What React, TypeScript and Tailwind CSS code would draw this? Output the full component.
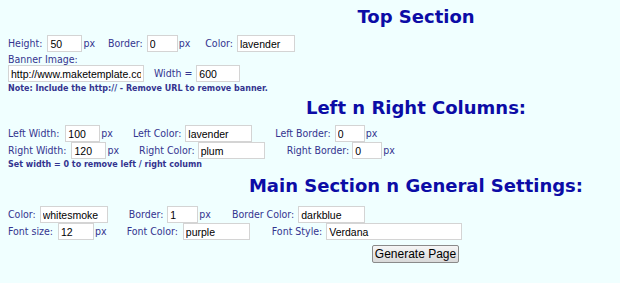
import React from "react";

function Field({ value, w, className = "" }: { value: string; w: string; className?: string }) {
  return (
    <input
      readOnly
      value={value}
      className={`${w} h-[17px] border border-[#d4d4d4] bg-white px-[2px] text-[10.5px] text-black font-['Liberation_Sans',Arial,sans-serif] outline-none ${className}`}
    />
  );
}

function Heading({ children }: { children: React.ReactNode }) {
  return (
    <div className="flex justify-center pl-[212px]">
      <h2 className="text-[18px] font-bold leading-[22px] text-[#0c0ca6] whitespace-nowrap font-['DejaVu_Sans',Verdana,sans-serif]">
        {children}
      </h2>
    </div>
  );
}

export default function App() {
  return (
    <div className="w-[620px] h-[283px] overflow-hidden bg-[#f0ffff] font-['DejaVu_Sans_Condensed','DejaVu_Sans',Tahoma,sans-serif] text-[10.5px] text-[#34348f]">
      <div className="pt-[6px] px-[8px]">
        <Heading>Top Section</Heading>

        <div className="mt-[7px] flex items-center h-[17px]">
          <span>Height:</span>
          <Field value="50" w="w-[35px]" className="ml-[5px]" />
          <span className="ml-[1px]">px</span>
          <span className="ml-[13px]">Border:</span>
          <Field value="0" w="w-[31px]" className="ml-[4px]" />
          <span className="ml-[1px]">px</span>
          <span className="ml-[15px]">Color:</span>
          <Field value="lavender" w="w-[58px]" className="ml-[4px]" />
        </div>
        <div className="leading-[12px] mt-[1px]">Banner Image:</div>
        <div className="flex items-center h-[17px]">
          <Field value="http://www.maketemplate.com" w="w-[136px]" />
          <span className="ml-[10px]">Width =</span>
          <Field value="600" w="w-[44px]" className="ml-[4px]" />
        </div>
        <div className="mt-[2px] text-[8px] font-bold leading-[10px] font-['DejaVu_Sans',Verdana,sans-serif]">
          Note: Include the http:// - Remove URL to remove banner.
        </div>

        <div className="mt-[3px]">
          <Heading>Left n Right Columns:</Heading>
        </div>

        <div className="mt-[6px] flex items-center h-[17px]">
          <span>Left Width:</span>
          <Field value="100" w="w-[35px]" className="ml-[6px]" />
          <span className="ml-[1px]">px</span>
          <span className="ml-[20px]">Left Color:</span>
          <Field value="lavender" w="w-[67px]" className="ml-[4px]" />
          <span className="ml-[23px]">Left Border:</span>
          <Field value="0" w="w-[30px]" className="ml-[4px]" />
          <span className="ml-[1px]">px</span>
        </div>
        <div className="flex items-center h-[17px]">
          <span>Right Width:</span>
          <Field value="120" w="w-[35px]" className="ml-[5px]" />
          <span className="ml-[1px]">px</span>
          <span className="ml-[20px]">Right Color:</span>
          <Field value="plum" w="w-[67px]" className="ml-[3px]" />
          <span className="ml-[22px]">Right Border:</span>
          <Field value="0" w="w-[30px]" className="ml-[3px]" />
          <span className="ml-[1px]">px</span>
        </div>
        <div className="mt-[1px] text-[8px] font-bold leading-[10px] font-['DejaVu_Sans',Verdana,sans-serif]">
          Set width = 0 to remove left / right column
        </div>

        <div className="mt-[5px]">
          <Heading>Main Section n General Settings:</Heading>
        </div>

        <div className="mt-[9px] flex items-center h-[17px]">
          <span>Color:</span>
          <Field value="whitesmoke" w="w-[68px]" className="ml-[4px]" />
          <span className="ml-[21px]">Border:</span>
          <Field value="1" w="w-[31px]" className="ml-[4px]" />
          <span className="ml-[1px]">px</span>
          <span className="ml-[21px]">Border Color:</span>
          <Field value="darkblue" w="w-[67px]" className="ml-[4px]" />
        </div>
        <div className="flex items-center h-[17px]">
          <span>Font size:</span>
          <Field value="12" w="w-[36px]" className="ml-[5px]" />
          <span className="ml-[1px]">px</span>
          <span className="ml-[20px]">Font Color:</span>
          <Field value="purple" w="w-[67px]" className="ml-[5px]" />
          <span className="ml-[22px]">Font Style:</span>
          <Field value="Verdana" w="w-[136px]" className="ml-[4px]" />
        </div>

        <div className="mt-[5px] flex pl-[364px]">
          <button className="h-[18px] w-[87px] rounded-[2px] border border-[#8a8a8a] bg-gradient-to-b from-[#f6f6f6] to-[#d9d9d9] text-[12px] leading-none text-black font-['Liberation_Sans',Arial,sans-serif]">
            Generate Page
          </button>
        </div>
      </div>
    </div>
  );
}
